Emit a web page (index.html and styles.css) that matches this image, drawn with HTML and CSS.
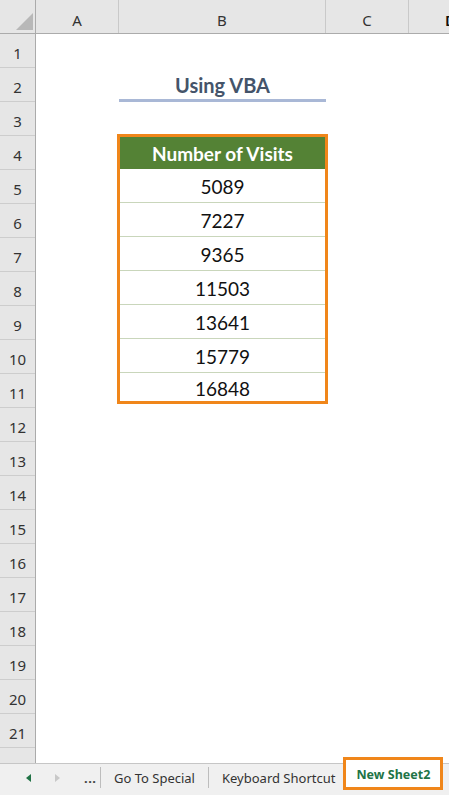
FILE: index.html
```html
<!DOCTYPE html>
<html>
<head>
<meta charset="utf-8">
<link rel="stylesheet" href="styles.css">
</head>
<body>
<div class="app">
  <div class="colheads">
    <div class="corner"><span class="tri"></span></div>
    <div class="ch ch-a">A</div>
    <div class="ch ch-b">B</div>
    <div class="ch ch-c">C</div>
    <div class="ch ch-d">D</div>
  </div>
  <div class="body">
    <div class="rowheads">
      <div class="rh">1</div><div class="rh">2</div><div class="rh">3</div><div class="rh">4</div>
      <div class="rh">5</div><div class="rh">6</div><div class="rh">7</div><div class="rh">8</div>
      <div class="rh">9</div><div class="rh">10</div><div class="rh">11</div><div class="rh">12</div>
      <div class="rh">13</div><div class="rh">14</div><div class="rh">15</div><div class="rh">16</div>
      <div class="rh">17</div><div class="rh">18</div><div class="rh">19</div><div class="rh">20</div>
      <div class="rh">21</div><div class="rh"></div>
    </div>
    <div class="grid">
      <div class="title">Using VBA</div>
      <div class="visits">
        <div class="v-head">Number of Visits</div>
        <div class="v-row">5089</div>
        <div class="v-row">7227</div>
        <div class="v-row">9365</div>
        <div class="v-row">11503</div>
        <div class="v-row">13641</div>
        <div class="v-row">15779</div>
        <div class="v-row v-last">16848</div>
      </div>
    </div>
  </div>
  <div class="tabbar">
    <div class="nav">
      <svg class="arrow" width="6" height="8" viewBox="0 0 6 8"><path d="M5 0 L0 4 L5 8 Z" fill="#217346"/></svg>
      <svg class="arrow" width="6" height="8" viewBox="0 0 6 8"><path d="M1 0 L6 4 L1 8 Z" fill="#c8c8c8"/></svg>
      <span class="dots">...</span>
    </div>
    <div class="tab">Go To Special</div>
    <div class="tab tab-before-active">Keyboard Shortcut</div>
    <div class="tab tab-active">New Sheet2</div>
  </div>
</div>
</body>
</html>
```
FILE: styles.css
```css
* { box-sizing: border-box; }
html, body { margin: 0; padding: 0; }
body { width: 449px; height: 795px; overflow: hidden; background: #fff; font-family: "Noto Sans", "Open Sans", sans-serif; }
.app { display: flex; flex-direction: column; height: 795px; width: 449px; overflow: hidden; }

.colheads { display: flex; height: 34px; flex: 0 0 34px; background: #e6e6e6; border-bottom: 1px solid #ababab; overflow: hidden; }
.corner { flex: 0 0 36px; position: relative; border-right: 1px solid #ababab; }
.tri { position: absolute; left: 16px; top: 13px; width: 0; height: 0; border-style: solid; border-width: 0 0 17px 17px; border-color: transparent transparent #b8b8b8 transparent; }
.ch { display: flex; align-items: center; justify-content: center; font-size: 15px; color: #333; border-right: 1px solid #c9c9c9; padding-top: 6px; }
.ch-a { flex: 0 0 83px; }
.ch-b { flex: 0 0 207px; }
.ch-c { flex: 0 0 83px; }
.ch-d { flex: 0 0 83px; border-right: none; color: #111; font-weight: 600; }

.body { flex: 1 1 auto; display: flex; overflow: hidden; }
.rowheads { flex: 0 0 36px; background: #e6e6e6; border-right: 1px solid #ababab; display: flex; flex-direction: column; }
.rh { flex: 0 0 34px; height: 34px; border-bottom: 1px solid #cdcdcd; display: flex; align-items: center; justify-content: center; font-size: 15px; color: #333; padding-top: 5px; }

.grid { display: grid; grid-template-columns: 83px 207px 83px 83px; grid-template-rows: repeat(22, 34px); font-family: Lato, "Open Sans", sans-serif; }
.title { grid-column: 2; grid-row: 2; display: flex; align-items: center; justify-content: center; font-weight: 700; font-size: 20px; color: #44546a; border-bottom: 3px solid #a9b8d6; padding-top: 2px; }

.visits { grid-column: 2; grid-row: 4 / 12; align-self: start; margin: -2px -2px 0 -2px; border: 3px solid #f0861a; display: flex; flex-direction: column; }
.v-head { height: 32px; background: #548235; color: #fff; font-weight: 700; font-size: 19px; display: flex; align-items: center; justify-content: center; padding-top: 1px; }
.v-row { height: 34px; border-bottom: 1px solid #c9d6bb; display: flex; align-items: center; justify-content: center; font-size: 19px; color: #111; padding-top: 2px; }
.v-last { height: 28px; border-bottom: none; }

.tabbar { flex: 0 0 32px; height: 32px; background: #f0f0f0; border-top: 1px solid #c6c6c6; display: flex; align-items: stretch; font-size: 13px; color: #333; white-space: nowrap; }
.nav { flex: 0 0 101px; display: flex; align-items: center; border-right: 1px solid #bdbdbd; margin: 3px 0 7px 0; padding-left: 26px; }
.arrow { display: block; margin-right: 22px; flex: 0 0 auto; }
.dots { font-weight: 700; color: #444; letter-spacing: 0.5px; margin-left: 2px; }
.tab { flex: 0 0 auto; display: flex; align-items: center; padding: 0 13px; border-right: 1px solid #bdbdbd; margin: 3px 0 7px 0; }
.tab-before-active { border-right: none; padding: 0 8px 0 13px; }
.tab-active { border: 3px solid #f0861a; background: #fff; color: #217346; font-weight: 700; font-size: 12.5px; margin: -7px 0 5px 0; padding: 2px 10px 0 10px; }
```
